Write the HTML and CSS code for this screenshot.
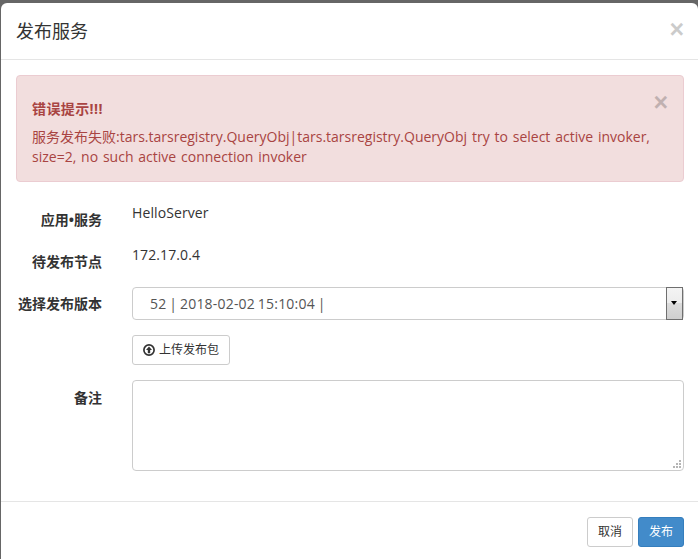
FILE: index.html
```html
<!DOCTYPE html>
<html lang="en">
<head>
    <meta charset="UTF-8">
    <meta name="viewport" content="width=device-width, initial-scale=1.0">
    <link rel="stylesheet" href="styles.css">
</head>
<body>
    <div class="modal">
        <header class="modal-header">
            <h4 class="modal-title">发布服务</h4>
            <span class="close header-close">×</span>
        </header>

        <div class="modal-body">
            <div class="alert">
                <span class="close alert-close">×</span>
                <strong class="alert-title">错误提示!!!</strong>
                <p class="alert-text">服务发布失败:tars.tarsregistry.QueryObj|tars.tarsregistry.QueryObj try to select active invoker, size=2, no such active connection invoker</p>
            </div>

            <form class="form">
                <div class="row row-app">
                    <label class="label">应用•服务</label>
                    <div class="value">HelloServer</div>
                </div>
                <div class="row row-node">
                    <label class="label">待发布节点</label>
                    <div class="value">172.17.0.4</div>
                </div>
                <div class="row row-version">
                    <label class="label">选择发布版本</label>
                    <div class="select-wrap">
                        <select class="select">
                            <option>52 | 2018-02-02 15:10:04 |</option>
                        </select>
                        <span class="select-arrow"></span>
                    </div>
                </div>
                <div class="row row-upload">
                    <span class="label"></span>
                    <button type="button" class="btn btn-upload">
                        <svg class="icon" viewBox="0 0 12 12" width="12" height="12">
                            <circle cx="6" cy="6" r="5.1" fill="none" stroke="#333" stroke-width="1.7"/>
                            <path d="M6 2.6 L9 6 H7.2 V9.2 H4.8 V6 H3 Z" fill="#333"/>
                        </svg>
                        上传发布包
                    </button>
                </div>
                <div class="row row-note">
                    <label class="label">备注</label>
                    <div class="textarea-wrap">
                        <textarea class="textarea"></textarea>
                        <svg class="grip" viewBox="0 0 8 8" width="8" height="8">
                            <rect x="6" y="0" width="2" height="2"/>
                            <rect x="3" y="3" width="2" height="2"/>
                            <rect x="6" y="3" width="2" height="2"/>
                            <rect x="0" y="6" width="2" height="2"/>
                            <rect x="3" y="6" width="2" height="2"/>
                            <rect x="6" y="6" width="2" height="2"/>
                        </svg>
                    </div>
                </div>
            </form>
        </div>

        <footer class="modal-footer">
            <button type="button" class="btn">取消</button>
            <button type="button" class="btn btn-primary">发布</button>
        </footer>
    </div>
</body>
</html>
```

FILE: styles.css
```css
* {
    margin: 0;
    padding: 0;
    box-sizing: border-box;
    font-family: "Open Sans", "Noto Sans CJK SC", sans-serif;
}

html, body {
    height: 559px;
    overflow: hidden;
}

body {
    background-color: #666;
    padding: 3px 0 0 1px;
    font-size: 14px;
    line-height: 20px;
    color: #333;
}

.modal {
    background-color: white;
    border-radius: 6px 6px 0 0;
    height: 556px;
}

.modal-header {
    height: 57px;
    padding: 0 14px 0 15px;
    border-bottom: 1px solid #e5e5e5;
    display: flex;
    justify-content: space-between;
    align-items: center;
}

.modal-title {
    font-size: 18px;
    font-weight: normal;
}

.close {
    font-family: "Liberation Sans", sans-serif;
    font-size: 25px;
    font-weight: bold;
    line-height: 1;
    color: black;
    opacity: 0.2;
}

.header-close {
    margin-bottom: 4px;
}

.modal-body {
    padding: 15px 14px 0 15px;
    height: 441px;
}

.alert {
    position: relative;
    height: 107px;
    padding: 23px 30px 0 15px;
    background-color: #f2dede;
    border: 1px solid #ebccd1;
    border-radius: 4px;
    color: #a94442;
}

.alert-close {
    position: absolute;
    top: 14px;
    right: 15px;
}

.alert-title {
    display: block;
    margin-bottom: 8px;
    letter-spacing: 0.4px;
}

.alert-text {
    word-spacing: 1.2px;
}

.form {
    padding-top: 21px;
}

.row {
    display: flex;
    align-items: flex-start;
}

.label {
    width: 86px;
    margin-right: 30px;
    flex-shrink: 0;
    text-align: right;
    font-weight: bold;
}

.value {
    letter-spacing: 0.1px;
}

.row-app {
    height: 42px;
}

.row-node {
    height: 42px;
}

.row-app .label,
.row-node .label {
    padding-top: 7px;
}

.row-version {
    height: 48px;
}

.row-version .label {
    padding-top: 7px;
}

.row-upload {
    height: 45px;
}

.row-note .label {
    padding-top: 8px;
}

.select-wrap {
    position: relative;
    flex: 1;
}

.select {
    display: block;
    width: 100%;
    height: 33px;
    padding-left: 17px;
    appearance: none;
    background-color: white;
    border: 1px solid #ccc;
    border-radius: 4px;
    color: #555;
    font-size: 14px;
    letter-spacing: 0.2px;
    word-spacing: -1px;
}

.select-arrow {
    position: absolute;
    top: 0;
    right: 1px;
    width: 17px;
    height: 33px;
    border: 1px solid #6f6f6f;
    background: linear-gradient(#f4f4f4, #ececec 50%, #dcdcdc 50%, #cfcfcf);
}

.select-arrow:after {
    content: '';
    position: absolute;
    top: 13px;
    left: 4px;
    border-style: solid;
    border-width: 4px 3.5px 0;
    border-color: black transparent transparent;
}

.btn {
    height: 30px;
    padding: 0 10px;
    background-color: white;
    border: 1px solid #ccc;
    border-radius: 3px;
    color: #333;
    font-size: 12px;
    line-height: 18px;
}

.btn-upload {
    display: flex;
    align-items: center;
    gap: 4px;
}

.icon {
    display: block;
}

.textarea-wrap {
    position: relative;
    flex: 1;
}

.textarea {
    display: block;
    width: 100%;
    height: 91px;
    background-color: white;
    border: 1px solid #ccc;
    border-radius: 4px;
    resize: none;
}

.grip {
    position: absolute;
    right: 3px;
    bottom: 3px;
    fill: #b5b5b5;
}

.modal-footer {
    height: 58px;
    padding: 15px 14px 0 0;
    border-top: 1px solid #e5e5e5;
    display: flex;
    justify-content: flex-end;
    gap: 5px;
}

.btn-primary {
    background-color: #428bca;
    border-color: #357ebd;
    color: white;
}
```
